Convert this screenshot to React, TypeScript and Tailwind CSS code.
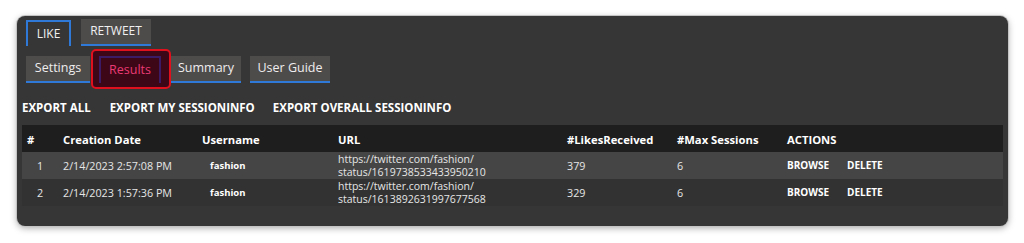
import React from 'react';

interface Row {
  id: number;
  created: string;
  username: string;
  url: [string, string];
  likes: number;
  sessions: number;
}

const rows: Row[] = [
  {
    id: 1,
    created: '2/14/2023 2:57:08 PM',
    username: 'fashion',
    url: ['https://twitter.com/fashion/', 'status/1619738533433950210'],
    likes: 379,
    sessions: 6,
  },
  {
    id: 2,
    created: '2/14/2023 1:57:36 PM',
    username: 'fashion',
    url: ['https://twitter.com/fashion/', 'status/1613892631997677568'],
    likes: 329,
    sessions: 6,
  },
];

const font = { fontFamily: '"Open Sans", "Noto Sans", sans-serif' };

export default function App() {
  return (
    <div className="h-[243px] w-[1024px] bg-white pl-[17px] pt-[16px]" style={font}>
      <div className="flex h-[210px] w-[991px] flex-col rounded-[8px] bg-[#363636] shadow-[0_0_0_1px_#c4c4c4,0_2px_7px_rgba(0,0,0,0.35)]">
        {/* Top tabs */}
        <div className="flex items-end gap-[10px] pl-[9px] pt-[3px]">
          <div className="flex h-[26px] w-[45px] items-center justify-center border-x-2 border-t-2 border-[#2f7ad8] text-[12px] text-[#f0f0f0]">
            LIKE
          </div>
          <div className="flex h-[27px] w-[70px] items-center justify-center border-b-2 border-[#2f7ad8] bg-[#4e4b4b] pb-[2px] text-[12px] text-[#f0f0f0]">
            RETWEET
          </div>
        </div>

        {/* Sub tabs */}
        <div className="mt-[10px] flex gap-[9px] pl-[9px]">
          <div className="flex h-[27px] w-[64px] items-center justify-center border-b-2 border-[#2f7ad8] bg-[#4e4b4b] text-[12.5px] text-[#eeeeee]">
            Settings
          </div>
          <div className="relative flex h-[27px] w-[62px] items-center justify-center text-[12.5px] text-[#ea3a74]">
            <div className="absolute -bottom-[6px] -left-[8px] -right-[10px] -top-[7px] rounded-[5px] border-2 border-[#e0101c] bg-[#3d0717]" />
            <div className="absolute inset-0 border-x-2 border-t-2 border-[#3b1a66]" />
            <span className="relative pt-[2px]">Results</span>
          </div>
          <div className="ml-[1px] flex h-[27px] w-[70px] items-center justify-center border-b-2 border-[#2f7ad8] bg-[#4e4b4b] text-[12.5px] text-[#eeeeee]">
            Summary
          </div>
          <div className="flex h-[27px] w-[80px] items-center justify-center border-b-2 border-[#2f7ad8] bg-[#4e4b4b] text-[12.5px] text-[#eeeeee]">
            User Guide
          </div>
        </div>

        {/* Export actions */}
        <div className="mt-[16px] flex pl-[5px] text-[11.5px] font-bold text-white">
          <span>EXPORT ALL</span>
          <span className="ml-[19px]">EXPORT MY SESSIONINFO</span>
          <span className="ml-[18px]">EXPORT OVERALL SESSIONINFO</span>
        </div>

        {/* Table */}
        <div className="mx-[5px] mt-[9px]">
          <div className="grid h-[27px] grid-cols-[41px_139px_136px_229px_110px_110px_1fr] items-center bg-[#1e1e1e] pt-[3px] text-[11.25px] font-bold text-white">
            <span className="pl-[5px]">#</span>
            <span>Creation Date</span>
            <span>Username</span>
            <span>URL</span>
            <span>#LikesReceived</span>
            <span>#Max Sessions</span>
            <span>ACTIONS</span>
          </div>
          {rows.map((row, i) => (
            <div
              key={row.id}
              className={`grid h-[27px] grid-cols-[41px_139px_136px_229px_110px_110px_1fr] items-center text-[10.75px] text-[#e6e6e6] ${
                i % 2 === 0 ? 'bg-[#454545]' : 'bg-[#323232]'
              }`}
            >
              <span className="pl-[15px]">{row.id}</span>
              <span>{row.created}</span>
              <span className="pl-[8px] text-[9.5px] font-bold text-white">{row.username}</span>
              <span className="text-[10.5px] leading-[13px]">
                {row.url[0]}
                <br />
                {row.url[1]}
              </span>
              <span>{row.likes}</span>
              <span>{row.sessions}</span>
              <span className="flex gap-[18px] text-[10px] font-bold text-white">
                <span>BROWSE</span>
                <span>DELETE</span>
              </span>
            </div>
          ))}
        </div>
      </div>
    </div>
  );
}
